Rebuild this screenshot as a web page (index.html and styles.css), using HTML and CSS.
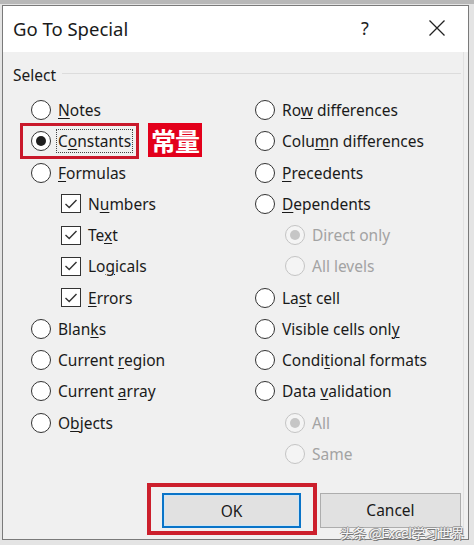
FILE: index.html
```html
<!DOCTYPE html>
<html>
<head>
<meta charset="utf-8">
<link rel="stylesheet" href="styles.css">
</head>
<body>
<div class="dialog">
  <div class="titlebar">
    <span class="title">Go To Special</span>
    <span class="help">?</span>
    <span class="close"><svg width="16" height="16" viewBox="0 0 16 16"><path d="M0.5 0.5 L15.5 15.5 M15.5 0.5 L0.5 15.5" stroke="#222" stroke-width="1.3" fill="none"/></svg></span>
  </div>
  <div class="body">
    <div class="group-head"><span class="legend">Select</span><span class="rule"></span></div>
    <div class="cols">
      <div class="col">
        <div class="opt"><span class="radio"></span><span class="lbl"><u>N</u>otes</span></div>
        <div class="opt marked"><span class="radio on"></span><span class="lbl focus">C<u>o</u>nstants</span><span class="redbox"></span><span class="tag">常量</span></div>
        <div class="opt"><span class="radio"></span><span class="lbl"><u>F</u>ormulas</span></div>
        <div class="opt sub"><span class="check"><svg width="18" height="18" viewBox="0 0 18 18"><path d="M3.5 9 L7.2 12.6 L14.5 5" stroke="#333" stroke-width="1.4" fill="none"/></svg></span><span class="lbl">N<u>u</u>mbers</span></div>
        <div class="opt sub"><span class="check"><svg width="18" height="18" viewBox="0 0 18 18"><path d="M3.5 9 L7.2 12.6 L14.5 5" stroke="#333" stroke-width="1.4" fill="none"/></svg></span><span class="lbl">Te<u>x</u>t</span></div>
        <div class="opt sub"><span class="check"><svg width="18" height="18" viewBox="0 0 18 18"><path d="M3.5 9 L7.2 12.6 L14.5 5" stroke="#333" stroke-width="1.4" fill="none"/></svg></span><span class="lbl">Lo<u>g</u>icals</span></div>
        <div class="opt sub"><span class="check"><svg width="18" height="18" viewBox="0 0 18 18"><path d="M3.5 9 L7.2 12.6 L14.5 5" stroke="#333" stroke-width="1.4" fill="none"/></svg></span><span class="lbl"><u>E</u>rrors</span></div>
        <div class="opt"><span class="radio"></span><span class="lbl">Blan<u>k</u>s</span></div>
        <div class="opt"><span class="radio"></span><span class="lbl">Current <u>r</u>egion</span></div>
        <div class="opt"><span class="radio"></span><span class="lbl">Current <u>a</u>rray</span></div>
        <div class="opt"><span class="radio"></span><span class="lbl">O<u>b</u>jects</span></div>
      </div>
      <div class="col">
        <div class="opt"><span class="radio"></span><span class="lbl">Ro<u>w</u> differences</span></div>
        <div class="opt"><span class="radio"></span><span class="lbl">Colu<u>m</u>n differences</span></div>
        <div class="opt"><span class="radio"></span><span class="lbl"><u>P</u>recedents</span></div>
        <div class="opt"><span class="radio"></span><span class="lbl"><u>D</u>ependents</span></div>
        <div class="opt sub off"><span class="radio on"></span><span class="lbl">Direct only</span></div>
        <div class="opt sub off"><span class="radio"></span><span class="lbl">All levels</span></div>
        <div class="opt"><span class="radio"></span><span class="lbl">La<u>s</u>t cell</span></div>
        <div class="opt"><span class="radio"></span><span class="lbl">Visible cells onl<u>y</u></span></div>
        <div class="opt"><span class="radio"></span><span class="lbl">Condi<u>t</u>ional formats</span></div>
        <div class="opt"><span class="radio"></span><span class="lbl">Data <u>v</u>alidation</span></div>
        <div class="opt sub off"><span class="radio on"></span><span class="lbl">All</span></div>
        <div class="opt sub off"><span class="radio"></span><span class="lbl">Same</span></div>
      </div>
    </div>
    <div class="buttons">
      <div class="okwrap"><button class="btn ok">OK</button><span class="redframe"></span></div>
      <button class="btn cancel">Cancel</button>
    </div>
  </div>
  <span class="watermark">头条 @Excel学习世界</span>
</div>
</body>
</html>
```
FILE: styles.css
```css
html, body {
  margin: 0;
  padding: 0;
}
body {
  background: #e4e4e4;
  width: 474px;
  height: 545px;
  overflow: hidden;
  font-family: "Noto Sans", "Open Sans", sans-serif;
  color: #1a1a1a;
  border-top: 4px solid #b8b8b8;
  box-sizing: border-box;
}
.dialog {
  position: relative;
  margin: 1px 0 0 2px;
  width: 467px;
  height: 535px;
  box-sizing: border-box;
  border: 1px solid #7a7a7a;
  background: #f0f0f0;
  display: flex;
  flex-direction: column;
}
.titlebar {
  height: 46px;
  background: #fff;
  display: flex;
  align-items: center;
  flex: none;
}
.title {
  margin-left: 10px;
  font-size: 18.5px;
  color: #1a1a1a;
  flex: 1;
  padding-bottom: 2px;
}
.help {
  font-size: 18px;
  width: 10px;
  margin-right: 58px;
  color: #222;
  padding-bottom: 2px;
}
.close {
  width: 16px;
  height: 16px;
  margin-right: 23px;
  display: flex;
  margin-bottom: 2px;
}
.body {
  flex: 1;
  display: flex;
  flex-direction: column;
  border-right: 1px solid #e2e2e2;
  margin-right: 4px;
}
.group-head {
  display: flex;
  align-items: center;
  height: 22px;
  margin-top: 12px;
  padding-left: 10px;
  padding-right: 2px;
}
.legend {
  font-size: 15.5px;
  line-height: 22px;
}
.rule {
  flex: 1;
  height: 1px;
  background: #dcdcdc;
  margin-left: 6px;
  margin-top: -3px;
}
.cols {
  display: grid;
  grid-template-columns: 224px 1fr;
  padding-left: 28px;
  padding-top: 8.4px;
}
.col {
  display: flex;
  flex-direction: column;
}
.opt {
  position: relative;
  height: 31.25px;
  display: flex;
  align-items: center;
  gap: 7px;
  font-size: 15.5px;
}
.opt.sub {
  padding-left: 30px;
}
.lbl {
  line-height: 20px;
  white-space: nowrap;
}
u {
  text-decoration-thickness: 1px;
  text-underline-offset: 2px;
}
.radio {
  flex: none;
  width: 20px;
  height: 20px;
  box-sizing: border-box;
  border: 1.6px solid #333;
  border-radius: 50%;
  background: #fff;
  display: flex;
  align-items: center;
  justify-content: center;
}
.radio.on::after {
  content: "";
  width: 10px;
  height: 10px;
  border-radius: 50%;
  background: #1e1e1e;
}
.off {
  color: #a3a3a3;
}
.off .radio {
  border-color: #c4c4c4;
  background: #f4f4f4;
}
.off .radio.on::after {
  background: #c6c6c6;
}
.check {
  flex: none;
  width: 20px;
  height: 19px;
  box-sizing: border-box;
  border: 1px solid #333;
  background: #fff;
  display: flex;
  align-items: center;
  justify-content: center;
}
.focus {
  border: 1px dotted #444;
  padding: 1px 1px;
  margin-left: -2px;
}
.redbox {
  position: absolute;
  left: -11px;
  top: -3px;
  width: 119px;
  height: 36px;
  box-sizing: border-box;
  border: 3px solid #c9182b;
}
.tag {
  position: absolute;
  left: 117px;
  top: -3px;
  width: 54px;
  height: 34px;
  background: #e3001b;
  color: #fff;
  font-family: "Noto Sans CJK SC", sans-serif;
  font-weight: 700;
  font-size: 25px;
  line-height: 34px;
  text-align: center;
  letter-spacing: -1px;
}
.buttons {
  margin-top: auto;
  margin-bottom: 11px;
  display: flex;
  justify-content: flex-end;
  gap: 19px;
  padding-right: 2px;
}
.okwrap {
  position: relative;
  display: flex;
}
.btn {
  width: 141px;
  height: 35px;
  box-sizing: border-box;
  background: #e1e1e1;
  border: 1px solid #adadad;
  font-family: "Noto Sans", sans-serif;
  font-size: 15.5px;
  line-height: 20px;
  color: #1a1a1a;
  padding: 0;
  margin: 0;
}
.cancel {
  padding-bottom: 1px;
}
.btn.ok {
  width: 139px;
  border: 2px solid #0a74c8;
  box-shadow: inset 0 0 0 1px #cde6f7;
}
.redframe {
  position: absolute;
  left: -15px;
  top: -10px;
  right: -16px;
  bottom: -7px;
  border: 4px solid #cc1f2c;
}
.watermark {
  position: absolute;
  right: 4px;
  bottom: -3px;
  font-family: "Noto Sans CJK SC", sans-serif;
  font-size: 13px;
  line-height: 18px;
  color: #f6f6f6;
  text-shadow: 1px 1px 0 #777, -1px 0 0 #888, 0 -1px 0 #999;
  white-space: nowrap;
}
```
